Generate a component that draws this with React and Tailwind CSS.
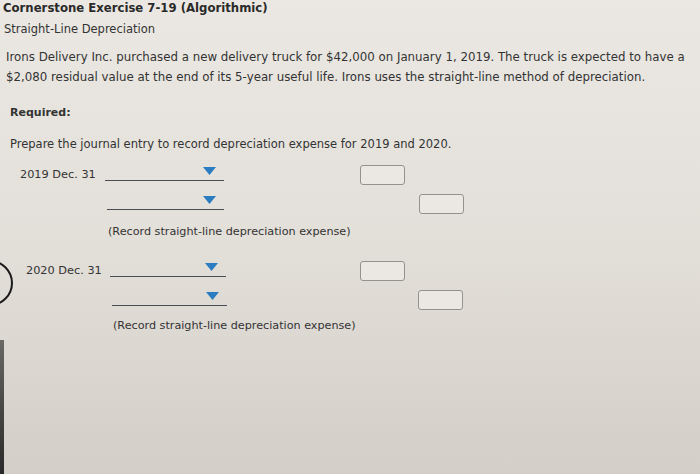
import React from "react";

const Caret = () => (
    <svg width="13" height="8" viewBox="0 0 13 8" className="absolute right-[8px] top-[2px]">
        <path d="M0 0 L13 0 L6.5 8 Z" fill="#2b7cc0" />
    </svg>
);

const Dropdown = ({ width }) => (
    <div
        className="relative h-[16px] border-b-[1.5px] border-[#4a4d57]"
        style={{ width }}
    >
        <Caret />
    </div>
);

const AmountBox = () => (
    <div className="w-[45px] h-[20px] rounded-[3px] border-[1.5px] border-[#94928d] bg-[#ebe8e3]" />
);

const JournalRow = ({ label, indent, labelWidth, dropWidth, gap, boxGap, mt }) => (
    <div className="flex items-center h-[20px]" style={{ marginTop: mt, paddingLeft: indent }}>
        <div className="text-[11.3px] leading-[14px] text-[#333]" style={{ width: labelWidth }}>
            {label}
        </div>
        <div style={{ marginLeft: gap }} className="self-start">
            <Dropdown width={dropWidth} />
        </div>
        <div style={{ marginLeft: boxGap }}>
            <AmountBox />
        </div>
    </div>
);

const App = () => {
    return (
        <div
            className="relative w-[700px] h-[474px] overflow-hidden bg-gradient-to-b from-[#ebe8e3] via-[#e3dfd9] to-[#d3cfc8] text-[#333]"
            style={{ fontFamily: '"DejaVu Sans", Verdana, sans-serif' }}
        >
            {/* dark edge of the photo at bottom left */}
            <div className="absolute left-0 top-[340px] w-[4px] h-[134px] bg-gradient-to-b from-[#6a6864] to-[#2a2a2a]" />

            {/* partial circle at left edge */}
            <svg width="20" height="56" viewBox="0 0 20 56" className="absolute left-0 top-[255px]">
                <circle cx="-10" cy="28" r="22" fill="none" stroke="#1a1a1a" strokeWidth="2" />
            </svg>

            <div className="pl-[3px] text-[11.7px] leading-[16px] font-bold text-[#2a2a2a]">
                Cornerstone Exercise 7-19 (Algorithmic)
            </div>
            <div className="mt-[5px] pl-[4px] text-[11.5px] leading-[16px]">
                Straight-Line Depreciation
            </div>

            <p className="mt-[10px] pl-[6px] pr-[4px] text-[11.8px] leading-[20px] whitespace-nowrap">
                Irons Delivery Inc. purchased a new delivery truck for $42,000 on January 1, 2019. The truck is expected to have a
                <br />
                $2,080 residual value at the end of its 5-year useful life. Irons uses the straight-line method of depreciation.
            </p>

            <div className="mt-[18px] pl-[10px] text-[11px] leading-[16px] font-bold">
                Required:
            </div>
            <div className="mt-[15px] pl-[10px] text-[11.5px] leading-[16px]">
                Prepare the journal entry to record depreciation expense for 2019 and 2020.
            </div>

            <JournalRow label="2019 Dec. 31" indent={20} labelWidth={76} gap={9} dropWidth={119} boxGap={136} mt={13} />
            <JournalRow label="" indent={20} labelWidth={76} gap={11} dropWidth={117} boxGap={195} mt={9} />
            <div className="mt-[10px] pl-[108px] text-[11.2px] leading-[16px]">
                (Record straight-line depreciation expense)
            </div>

            <JournalRow label="2020 Dec. 31" indent={26} labelWidth={76} gap={8} dropWidth={116} boxGap={134} mt={21} />
            <JournalRow label="" indent={26} labelWidth={76} gap={10} dropWidth={115} boxGap={191} mt={9} />
            <div className="mt-[8px] pl-[113px] text-[11.2px] leading-[16px]">
                (Record straight-line depreciation expense)
            </div>
        </div>
    );
};

export default App;
